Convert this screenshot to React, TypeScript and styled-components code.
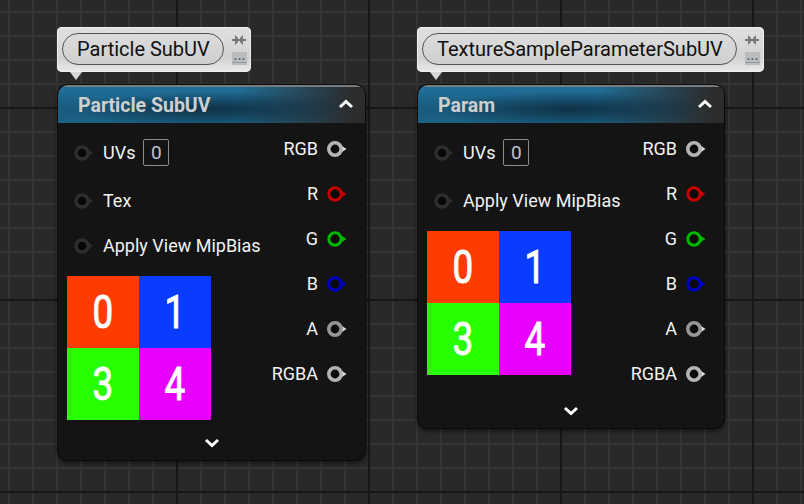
import styled, {createGlobalStyle} from "styled-components";

const GlobalStyle = createGlobalStyle`
  html, body {
    margin: 0;
    padding: 0;
    background: #292929;
  }
  body {
    font-family: Roboto, "Liberation Sans", sans-serif;
  }
`;

const Canvas = styled.div`
  position: relative;
  width: 804px;
  height: 504px;
  overflow: hidden;
  background-color: #292929;
  background-image:
    linear-gradient(to right, #171717 2px, transparent 2px),
    linear-gradient(to bottom, #171717 2px, transparent 2px),
    linear-gradient(to right, #343434 2px, transparent 2px),
    linear-gradient(to bottom, #343434 2px, transparent 2px);
  background-size: 192px 192px, 192px 192px, 24px 24px, 24px 24px;
  background-position: 176px 0, 0 107px, 8px 0, 0 11px;
`;

const NodeSlot = styled.div<{$x: number}>`
  position: absolute;
  left: ${p => p.$x}px;
  top: 85px;
`;

const Node = styled.div<{$width: number}>`
  width: ${p => p.$width}px;
  box-sizing: border-box;
  display: flex;
  flex-direction: column;
  background: #131413;
  border-radius: 10px;
  box-shadow: 0 0 0 1px #0b0b0b, 0 2px 5px 1px rgba(0, 0, 0, 0.55);
  color: #f2f2f2;
  overflow: hidden;
`;

const Header = styled.div`
  height: 38px;
  box-sizing: border-box;
  display: flex;
  align-items: center;
  justify-content: space-between;
  padding: 0 11px 2px 20px;
  border-top: 2px solid #777c80;
  background:
    radial-gradient(ellipse 46% 48% at 50% 62%, rgba(14, 48, 68, 0.95), rgba(14, 48, 68, 0) 100%),
    linear-gradient(to right, rgba(38, 38, 38, 0) 58%, #2c2c2c 96%),
    linear-gradient(to bottom, #20709b, #1a5b7e 60%, #1c6184);
`;

const Title = styled.span`
  font-size: 19.5px;
  font-weight: 700;
  color: #cfcfcf;
  line-height: 1;
  margin-top: 3px;
`;

const Body = styled.div`
  display: flex;
  justify-content: space-between;
  padding: 4px 17px 0 0;
`;

const LeftColumn = styled.div`
  display: flex;
  flex-direction: column;
  padding-bottom: 8px;
`;

const RightColumn = styled.div`
  display: flex;
  flex-direction: column;
  margin-top: -1px;
`;

const InputRow = styled.div<{$first?: boolean}>`
  height: ${p => (p.$first ? 51 : 45)}px;
  display: flex;
  align-items: center;
  gap: 8px;
  padding-left: 15px;
  font-size: 18px;
`;

const OutputRow = styled.div`
  height: 45px;
  display: flex;
  align-items: center;
  justify-content: flex-end;
  gap: 8px;
  font-size: 18px;
`;

const ValueBox = styled.span`
  width: 26px;
  height: 27px;
  box-sizing: border-box;
  display: flex;
  align-items: center;
  justify-content: center;
  border: 1px solid #8b8b8b;
  border-radius: 2px;
  color: #c4c4c4;
  font-size: 19px;
`;

const Texture = styled.div`
  width: 144px;
  height: 144px;
  margin: 8px 0 0 9px;
  display: grid;
  grid-template-columns: 1fr 1fr;
  grid-template-rows: 1fr 1fr;
`;

const Cell = styled.div<{$color: string}>`
  background: ${p => p.$color};
  display: flex;
  align-items: center;
  justify-content: center;
  color: #fff;
  font-size: 46px;
  font-weight: 400;

  span {
    display: block;
    transform: scaleX(0.8);
    -webkit-text-stroke: 1px #fff;
  }
`;

const Footer = styled.div`
  height: 32px;
  display: flex;
  justify-content: center;
  padding-top: 10px;
  box-sizing: border-box;
  margin-top: auto;
`;

const Comment = styled.div`
  position: absolute;
  left: -1px;
  top: -58px;
  height: 45px;
  box-sizing: border-box;
  display: flex;
  align-items: center;
  gap: 8px;
  padding: 0 4px 1px 5px;
  border-radius: 5px;
  background: linear-gradient(to bottom, #e0e0e0, #d2d2d2 70%, #eaeaea);
  box-shadow: inset 0 0 0 1px #efefef;

  &::after {
    content: "";
    position: absolute;
    left: 13px;
    bottom: -8px;
    border-left: 6px solid transparent;
    border-right: 6px solid transparent;
    border-top: 8px solid #d8d8d8;
  }
`;

const CommentPill = styled.div`
  height: 32px;
  box-sizing: border-box;
  display: flex;
  align-items: center;
  padding: 0 13px 0 14px;
  border: 1.5px solid #555;
  border-radius: 16px;
  background: linear-gradient(to bottom, #dcdcdc, #cfcfcf);
  color: #111;
  font-size: 20px;
  white-space: nowrap;
`;

const CommentTools = styled.div`
  display: flex;
  flex-direction: column;
  align-items: center;
  gap: 6px;
`;

const Chevron = ({up}: {up?: boolean}) => (
    <svg width="16" height="10" viewBox="0 0 16 10">
        <path
            d={up ? "M2 8 L8 2.5 L14 8" : "M2 2 L8 7.5 L14 2"}
            fill="none" stroke="#fff" strokeWidth="3"
        />
    </svg>
);

const PinIcon = () => (
    <svg width="14" height="12" viewBox="0 0 14 12">
        <path d="M0 6 H14" stroke="#777" strokeWidth="2" />
        <path d="M3 1 L6 4 V8 L3 11 Z" fill="#777" />
        <path d="M11 1 L8 4 V8 L11 11 Z" fill="#777" />
    </svg>
);

const MoreIcon = () => (
    <svg width="15" height="13" viewBox="0 0 15 13">
        <rect width="15" height="13" fill="#bcbcbc" />
        <circle cx="3.5" cy="7" r="1.1" fill="#4d6f80" />
        <circle cx="7.5" cy="7" r="1.1" fill="#4d6f80" />
        <circle cx="11.5" cy="7" r="1.1" fill="#4d6f80" />
        <rect y="10" width="15" height="1" fill="#8d9aa0" />
    </svg>
);

const InputPin = () => (
    <svg width="22" height="18" viewBox="0 0 22 18">
        <path d="M16 6 L20 9 L16 12 Z" fill="#2b2b2b" />
        <circle cx="9" cy="9" r="6" fill="#060606" stroke="#2e2e2e" strokeWidth="3.5" />
    </svg>
);

const OutputPin = ({color, glow}: {color: string, glow?: boolean}) => (
    <svg width="22" height="18" viewBox="0 0 22 18">
        <path d="M16 6 L20.5 9 L16 12 Z" fill={glow ? color : "#e0e0e0"} />
        <circle cx="9" cy="9" r="6.2" fill="#0a0a0a" stroke={color} strokeWidth={glow ? 3 : 3.6} />
    </svg>
);

interface OutputInfo {
    label: string,
    color: string,
    glow?: boolean
}

const outputs: OutputInfo[] = [
    {label: "RGB", color: "#b4b4b4"},
    {label: "R", color: "#c80000", glow: true},
    {label: "G", color: "#00b800", glow: true},
    {label: "B", color: "#0000c0", glow: true},
    {label: "A", color: "#969696"},
    {label: "RGBA", color: "#b4b4b4"},
];

const cells = [
    {digit: "0", color: "#ff3c00"},
    {digit: "1", color: "#0a3cff"},
    {digit: "3", color: "#28ff00"},
    {digit: "4", color: "#e800ff"},
];

interface MaterialNodeProps {
    x: number,
    width: number,
    comment: string,
    title: string,
    inputs: string[]
}

const MaterialNode = ({x, width, comment, title, inputs}: MaterialNodeProps) => (
    <NodeSlot $x={x}>
        <Comment>
            <CommentPill>{comment}</CommentPill>
            <CommentTools>
                <PinIcon />
                <MoreIcon />
            </CommentTools>
        </Comment>
        <Node $width={width}>
            <Header>
                <Title>{title}</Title>
                <Chevron up />
            </Header>
            <Body>
                <LeftColumn>
                    {inputs.map((name, i) => (
                        <InputRow key={name} $first={i === 0}>
                            <InputPin />
                            {name}
                            {i === 0 && <ValueBox>0</ValueBox>}
                        </InputRow>
                    ))}
                    <Texture>
                        {cells.map(c => (
                            <Cell key={c.digit} $color={c.color}><span>{c.digit}</span></Cell>
                        ))}
                    </Texture>
                </LeftColumn>
                <RightColumn>
                    {outputs.map(o => (
                        <OutputRow key={o.label}>
                            {o.label}
                            <OutputPin color={o.color} glow={o.glow} />
                        </OutputRow>
                    ))}
                </RightColumn>
            </Body>
            <Footer>
                <Chevron />
            </Footer>
        </Node>
    </NodeSlot>
);

export default function App() {
    return (
        <>
            <GlobalStyle />
            <Canvas>
                <MaterialNode
                    x={58} width={307}
                    comment="Particle SubUV" title="Particle SubUV"
                    inputs={["UVs", "Tex", "Apply View MipBias"]}
                />
                <MaterialNode
                    x={418} width={306}
                    comment="TextureSampleParameterSubUV" title="Param"
                    inputs={["UVs", "Apply View MipBias"]}
                />
            </Canvas>
        </>
    );
}
